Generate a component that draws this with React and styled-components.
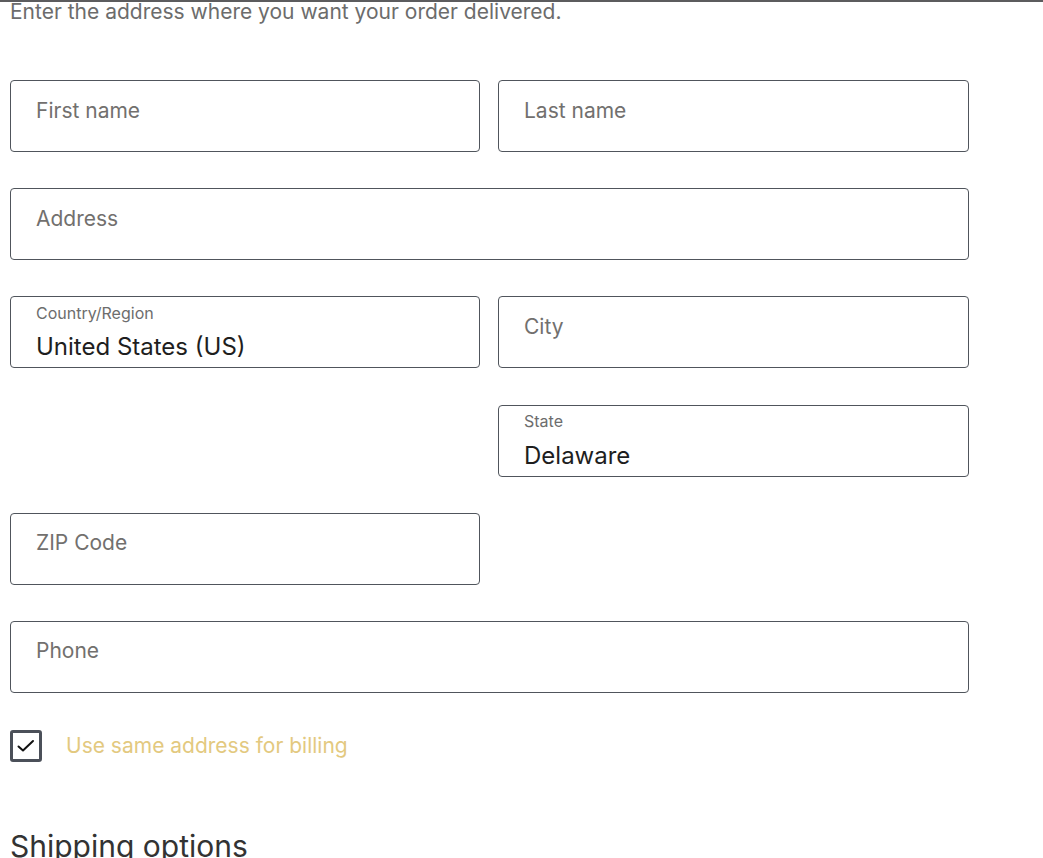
import React from "react";
import styled, { createGlobalStyle } from "styled-components";

const Global = createGlobalStyle`
  html, body { margin: 0; padding: 0; background: #fff; }
  body { font-family: Inter, "Noto Sans", sans-serif; color: #2f2f2f; overflow: hidden; }
  * { box-sizing: border-box; }
`;

const TopRule = styled.div`
  height: 2px;
  background: #5c5c5e;
`;

const Page = styled.div`
  padding: 0 10px;
  width: 979px;
`;

const Description = styled.p`
  margin: -1px 0 0;
  font-size: 21px;
  line-height: 21px;
  color: #6c6c6c;
`;

const Grid = styled.div`
  margin-top: 58px;
  display: grid;
  grid-template-columns: 470px 471px;
  column-gap: 18px;
  row-gap: 36.2px;
`;

const Field = styled.div`
  grid-column: ${(p) => p.$col || "auto"};
  height: 72px;
  border: 1px solid #50555c;
  border-radius: 4px;
  padding: ${(p) => (p.$filled ? "5.5px 25px 0" : "17.5px 25px 0")};
  display: flex;
  flex-direction: column;
`;

const Label = styled.span`
  font-size: ${(p) => (p.$filled ? "16px" : "21px")};
  line-height: ${(p) => (p.$filled ? "20px" : "24px")};
  color: ${(p) => (p.$filled ? "#6d6d6d" : "#72706e")};
`;

const Value = styled.span`
  margin-top: 10.5px;
  font-size: 24px;
  line-height: 28px;
  color: #1e1e1e;
`;

const CheckRow = styled.label`
  margin-top: 37px;
  display: flex;
  align-items: center;
  gap: 24px;
`;

const Box = styled.span`
  width: 32px;
  height: 32px;
  border: 3px solid #4b5059;
  border-radius: 3px;
  display: flex;
  align-items: center;
  justify-content: center;
`;

const CheckText = styled.span`
  font-size: 21px;
  line-height: 26px;
  color: #e3c97f;
`;

const Heading = styled.h2`
  margin: 66px 0 0;
  font-size: 30px;
  font-weight: 400;
  line-height: 36px;
  color: #333;
`;

function InputField({ label, value, col }) {
  return (
    <Field $col={col} $filled={!!value}>
      <Label $filled={!!value}>{label}</Label>
      {value && <Value>{value}</Value>}
    </Field>
  );
}

export default function App() {
  return (
    <>
      <Global />
      <TopRule />
      <Page>
        <Description>Enter the address where you want your order delivered.</Description>
        <Grid>
          <InputField label="First name" />
          <InputField label="Last name" />
          <InputField label="Address" col="1 / span 2" />
          <InputField label="Country/Region" value="United States (US)" />
          <InputField label="City" />
          <InputField label="State" value="Delaware" col="2" />
          <InputField label="ZIP Code" col="1" />
          <InputField label="Phone" col="1 / span 2" />
        </Grid>
        <CheckRow>
          <Box>
            <svg width="24" height="24" viewBox="0 0 24 24" fill="none" stroke="#111" strokeWidth="2" strokeLinecap="round" strokeLinejoin="round">
              <polyline points="4.5 12.5 9 16.5 19 7" />
            </svg>
          </Box>
          <CheckText>Use same address for billing</CheckText>
        </CheckRow>
        <Heading>Shipping options</Heading>
      </Page>
    </>
  );
}
